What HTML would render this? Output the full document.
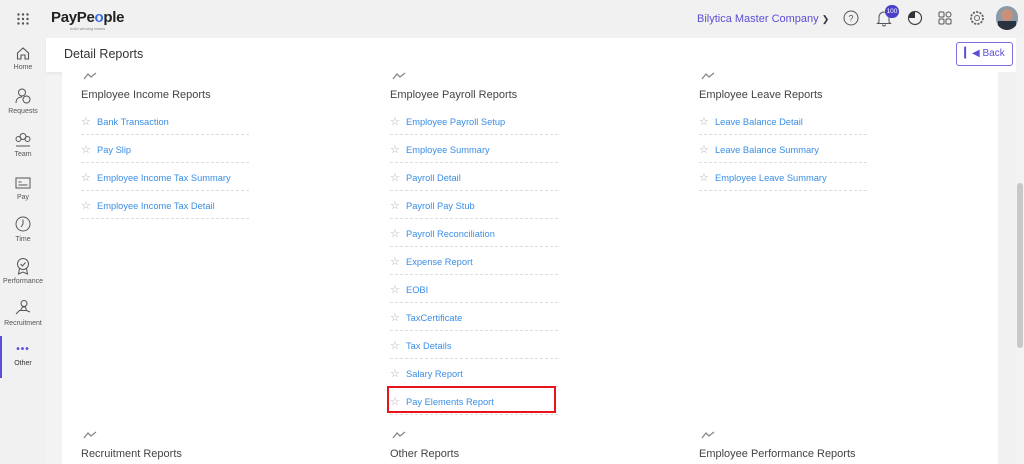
<!DOCTYPE html>
<html><head><style>
*{box-sizing:border-box;margin:0;padding:0}
body{width:1024px;height:464px;overflow:hidden;background:#f3f3f3;font-family:"Liberation Sans",sans-serif;position:relative}
.top{position:absolute;left:0;top:0;width:1024px;height:38px;background:#f1f1f1}
.side{position:absolute;left:0;top:38px;width:46px;height:426px;background:#f1f1f1}
.si{position:absolute;left:0;width:46px;text-align:center;font-size:7px;color:#555}
.si svg{display:block;margin:0 auto 3px}
.hdr{position:absolute;left:46px;top:38px;width:970px;height:34px;background:#fff;box-shadow:0 2px 3px rgba(0,0,0,.05)}
.card{position:absolute;left:62px;top:72px;width:936px;height:392px;background:#fff}
.strip{position:absolute;left:998px;top:72px;width:18px;height:392px;background:#f1f1f1}
.sb{position:absolute;left:1016px;top:38px;width:8px;height:426px;background:#f3f3f3}
.th{position:absolute;left:1017px;top:183px;width:6px;height:165px;background:#c8c8c8;border-radius:3px}
.col{position:absolute}
.col h3{font-weight:normal;font-size:11px;color:#444;position:absolute;left:0;top:17px;white-space:nowrap}
.tr{position:absolute;left:2px;top:0px}
.it{position:absolute;left:0;width:168px;height:28px;border-bottom:1px dashed #ddd;font-size:9.3px;color:#3a8ee6;white-space:nowrap}
.it span{position:absolute;left:16px;top:10px}
.it i{position:absolute;left:0;top:8px;font-style:normal;color:#aaa;font-size:11px}
</style></head><body>
<div class="top"></div>
<svg style="position:absolute;left:17px;top:13px" width="12" height="12"><g fill="#555"><circle cx="1.5" cy="1.5" r="1.2"/><circle cx="6" cy="1.5" r="1.2"/><circle cx="10.5" cy="1.5" r="1.2"/><circle cx="1.5" cy="6" r="1.2"/><circle cx="6" cy="6" r="1.2"/><circle cx="10.5" cy="6" r="1.2"/><circle cx="1.5" cy="10.5" r="1.2"/><circle cx="6" cy="10.5" r="1.2"/><circle cx="10.5" cy="10.5" r="1.2"/></g></svg>
<div style="position:absolute;left:51px;top:9px;font-size:15px;font-weight:bold;color:#222;letter-spacing:-.3px">PayPe<span style="color:#3a6ee6">o</span>ple</div>
<div style="position:absolute;left:70px;top:26px;font-size:4px;color:#888">build winning teams</div>
<div style="position:absolute;left:697px;top:13px;font-size:11px;color:#5b4fd6">Bilytica Master Company <span style="color:#333;font-size:9px">&#10095;</span></div>
<svg style="position:absolute;left:843px;top:10px" width="16" height="16"><circle cx="8" cy="8" r="7" fill="none" stroke="#555"/><text x="8" y="11.5" font-size="9" text-anchor="middle" fill="#555" font-family="Liberation Sans">?</text></svg>
<svg style="position:absolute;left:876px;top:9px" width="16" height="18"><path d="M3 13V8a5 5 0 0110 0v5l1.5 1.5h-13z M6.5 15.5a1.5 1.5 0 003 0" fill="none" stroke="#555"/></svg>
<div style="position:absolute;left:885px;top:5px;width:14px;height:13px;border-radius:7px;background:#4a3fc9;color:#fff;font-size:6.5px;text-align:center;line-height:13px">100</div>
<svg style="position:absolute;left:907px;top:10px" width="16" height="16"><circle cx="8" cy="8" r="6.5" fill="none" stroke="#444" stroke-width="1.2"/><path d="M8 1.5A6.5 6.5 0 001.5 8H8z" fill="#333"/></svg>
<svg style="position:absolute;left:938px;top:11px" width="14" height="14"><g fill="none" stroke="#555"><rect x="1" y="1" width="5" height="5" rx="1"/><rect x="1" y="8" width="5" height="5" rx="1"/><rect x="8" y="8" width="5" height="5" rx="1"/><circle cx="10.5" cy="3.5" r="2.5"/></g></svg>
<svg style="position:absolute;left:969px;top:10px" width="16" height="16"><circle cx="8" cy="8" r="2.5" fill="none" stroke="#666"/><circle cx="8" cy="8" r="6" fill="none" stroke="#666" stroke-dasharray="2.2 1.2" stroke-width="1.8"/></svg>
<div style="position:absolute;left:996px;top:6px;width:22px;height:24px;border-radius:11px;background:#8a9aa8;overflow:hidden"><div style="position:absolute;left:5px;top:3px;width:12px;height:12px;border-radius:6px;background:#c8907a"></div><div style="position:absolute;left:2px;top:15px;width:18px;height:10px;background:#2a3240"></div></div>
<div class="side"></div>
<div class="si" style="top:45px"><svg width="16" height="16"><path d="M2.5 8L8 3l5.5 5v6H10V10H6v4H2.5z" fill="none" stroke="#555" stroke-width="1.1"/></svg>Home</div>
<div class="si" style="top:87px"><svg width="18" height="18"><circle cx="8" cy="5.5" r="3.5" fill="none" stroke="#555"/><path d="M2 16c0-4.5 3-6 6-6" fill="none" stroke="#555"/><circle cx="12.5" cy="12.5" r="3.5" fill="none" stroke="#555"/></svg>Requests</div>
<div class="si" style="top:132px"><svg width="18" height="16"><circle cx="9" cy="4.5" r="3" fill="none" stroke="#555"/><circle cx="4.5" cy="7" r="2.5" fill="none" stroke="#555"/><circle cx="13.5" cy="7" r="2.5" fill="none" stroke="#555"/><path d="M2 14h14" stroke="#555"/></svg>Team</div>
<div class="si" style="top:175px"><svg width="18" height="16"><rect x="2" y="3" width="14" height="10" fill="none" stroke="#555"/><path d="M4.5 7h3M4.5 10h9" stroke="#555"/></svg>Pay</div>
<div class="si" style="top:215px"><svg width="18" height="18"><circle cx="9" cy="9" r="7" fill="none" stroke="#555"/><path d="M9 4.5v4.5l-2 3" fill="none" stroke="#555"/></svg>Time</div>
<div class="si" style="top:257px"><svg width="18" height="18"><circle cx="9" cy="7" r="5.5" fill="none" stroke="#555"/><path d="M6.5 7l2 2L11.5 5.5M5.5 11.5l-1 5.5 4.5-2 4.5 2-1-5.5" fill="none" stroke="#555"/></svg>Performance</div>
<div class="si" style="top:299px"><svg width="18" height="18"><circle cx="10" cy="4.5" r="3" fill="none" stroke="#555"/><path d="M2 15l3.5-3.5h7l3.5 1.5M6.5 11.5l2-3.5h3l1 3.5" fill="none" stroke="#555"/></svg>Recruitment</div>
<div style="position:absolute;left:0;top:336px;width:2px;height:42px;background:#5b4fd6"></div>
<div class="si" style="top:345px;color:#333"><div style="color:#5b4fd6;font-size:10px;font-weight:bold;letter-spacing:1px;line-height:10px;margin-bottom:5px">•••</div>Other</div>
<div class="hdr"><div style="position:absolute;left:18px;top:9px;font-size:12.5px;color:#333">Detail Reports</div>
<div style="position:absolute;left:910px;top:4px;width:57px;height:24px;border:1px solid #7a70e0;border-radius:3px;font-size:10px;color:#5b4fd6;line-height:22px;text-align:center">&#9614;&#9664; Back</div></div>
<div class="card"></div><div class="strip"></div><div class="sb"><div></div></div><div class="th"></div>

<div class="col" style="left:81px;top:72px">
<svg class="tr" width="14" height="8"><path d="M1 7l4-5 3 3 5-4" fill="none" stroke="#888" stroke-width="1.3"/></svg>
<h3>Employee Income Reports</h3>
<div class="it" style="top:35px"><i>☆</i><span>Bank Transaction</span></div>
<div class="it" style="top:63px"><i>☆</i><span>Pay Slip</span></div>
<div class="it" style="top:91px"><i>☆</i><span>Employee Income Tax Summary</span></div>
<div class="it" style="top:119px"><i>☆</i><span>Employee Income Tax Detail</span></div>
</div>
<div class="col" style="left:390px;top:72px">
<svg class="tr" width="14" height="8"><path d="M1 7l4-5 3 3 5-4" fill="none" stroke="#888" stroke-width="1.3"/></svg>
<h3>Employee Payroll Reports</h3>
<div class="it" style="top:35px"><i>☆</i><span>Employee Payroll Setup</span></div>
<div class="it" style="top:63px"><i>☆</i><span>Employee Summary</span></div>
<div class="it" style="top:91px"><i>☆</i><span>Payroll Detail</span></div>
<div class="it" style="top:119px"><i>☆</i><span>Payroll Pay Stub</span></div>
<div class="it" style="top:147px"><i>☆</i><span>Payroll Reconciliation</span></div>
<div class="it" style="top:175px"><i>☆</i><span>Expense Report</span></div>
<div class="it" style="top:203px"><i>☆</i><span>EOBI</span></div>
<div class="it" style="top:231px"><i>☆</i><span>TaxCertificate</span></div>
<div class="it" style="top:259px"><i>☆</i><span>Tax Details</span></div>
<div class="it" style="top:287px"><i>☆</i><span>Salary Report</span></div>
<div class="it" style="top:315px"><i>☆</i><span>Pay Elements Report</span></div>
</div>
<div style="position:absolute;left:387px;top:386px;width:169px;height:27px;border:2px solid #e8141c"></div>
<div class="col" style="left:699px;top:72px">
<svg class="tr" width="14" height="8"><path d="M1 7l4-5 3 3 5-4" fill="none" stroke="#888" stroke-width="1.3"/></svg>
<h3>Employee Leave Reports</h3>
<div class="it" style="top:35px"><i>☆</i><span>Leave Balance Detail</span></div>
<div class="it" style="top:63px"><i>☆</i><span>Leave Balance Summary</span></div>
<div class="it" style="top:91px"><i>☆</i><span>Employee Leave Summary</span></div>
</div>
<div class="col" style="left:81px;top:431px"><svg class="tr" width="14" height="8"><path d="M1 7l4-5 3 3 5-4" fill="none" stroke="#888" stroke-width="1.3"/></svg><h3>Recruitment Reports</h3></div>
<div class="col" style="left:390px;top:431px"><svg class="tr" width="14" height="8"><path d="M1 7l4-5 3 3 5-4" fill="none" stroke="#888" stroke-width="1.3"/></svg><h3>Other Reports</h3></div>
<div class="col" style="left:699px;top:431px"><svg class="tr" width="14" height="8"><path d="M1 7l4-5 3 3 5-4" fill="none" stroke="#888" stroke-width="1.3"/></svg><h3>Employee Performance Reports</h3></div>
</body></html>
